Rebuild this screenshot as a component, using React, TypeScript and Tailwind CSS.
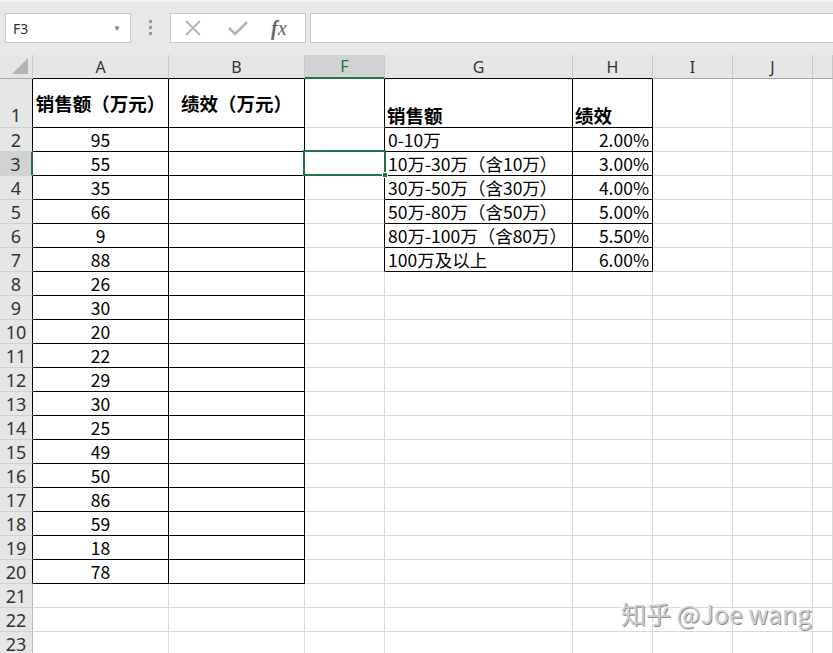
import type { ReactNode } from "react";

const COLS = ["A", "B", "F", "G", "H", "I", "J", "K"];
const SALES = [95, 55, 35, 66, 9, 88, 26, 30, 20, 22, 29, 30, 25, 49, 50, 86, 59, 18, 78];
const TIERS: [string, string][] = [
  ["0-10万", "2.00%"],
  ["10万-30万（含10万）", "3.00%"],
  ["30万-50万（含30万）", "4.00%"],
  ["50万-80万（含50万）", "5.00%"],
  ["80万-100万（含80万）", "5.50%"],
  ["100万及以上", "6.00%"],
];
const ROWS = 23;

function Cell({ row, col }: { row: number; col: string }) {
  const inLeft = (col === "A" || col === "B") && row <= 20;
  const inRight = (col === "G" || col === "H") && row <= 7;
  const leftOfRight = col === "F" && row <= 7;
  const black = inLeft || inRight;

  let cls = "relative flex min-w-0 overflow-hidden whitespace-nowrap border-r border-b leading-[22px] ";
  cls += black ? "border-b-black " : "border-b-[#d9d9d9] ";
  cls += black || leftOfRight ? "border-r-black " : "border-r-[#d9d9d9] ";

  let content: ReactNode = null;
  if (row === 1 && col === "A") {
    cls += "items-center justify-center font-bold text-[18.5px]";
    content = "销售额（万元）";
  } else if (row === 1 && col === "B") {
    cls += "items-center justify-center font-bold text-[18.5px]";
    content = "绩效（万元）";
  } else if (row === 1 && (col === "G" || col === "H")) {
    cls += "items-end pl-[2px] pb-[1px] font-bold text-[18.5px]";
    content = col === "G" ? "销售额" : "绩效";
  } else if (col === "A" && row >= 2 && row <= 20) {
    cls += "items-center justify-center";
    content = SALES[row - 2];
  } else if (col === "G" && row >= 2 && row <= 7) {
    cls += "items-center pl-[3px]";
    content = TIERS[row - 2][0];
  } else if (col === "H" && row >= 2 && row <= 7) {
    cls += "items-center justify-end pr-[3px]";
    content = TIERS[row - 2][1];
  }

  return <div className={cls}>{content}</div>;
}

function Toolbar() {
  return (
    <div className="flex h-[55px] items-start border-t-2 border-t-[#f3f3f3] bg-[#e8e8e8] pt-[11px]">
      <div className="ml-[5px] flex h-[30px] w-[126px] items-center justify-between border border-[#c8c8c8] bg-white pl-[7px] pr-[9px] font-['Noto_Sans',sans-serif] text-[14px] text-[#333]">
        <span>F3</span>
        <span className="text-[8px] text-[#777]">▼</span>
      </div>
      <div className="flex w-[39px] flex-col items-center justify-center gap-[3px] pt-[7px]">
        <span className="h-[3px] w-[3px] bg-[#9a9a9a]" />
        <span className="h-[3px] w-[3px] bg-[#9a9a9a]" />
        <span className="h-[3px] w-[3px] bg-[#9a9a9a]" />
      </div>
      <div className="flex h-[30px] w-[136px] items-center border border-[#c8c8c8] bg-white">
        <svg width="20" height="20" viewBox="0 0 20 20" className="ml-[12px]">
          <path d="M3 3 L17 17 M17 3 L3 17" stroke="#b5b5b5" strokeWidth="1.8" fill="none" />
        </svg>
        <svg width="22" height="20" viewBox="0 0 22 20" className="ml-[24px]">
          <path d="M2 10 L8 16 L20 4" stroke="#b5b5b5" strokeWidth="2.6" fill="none" />
        </svg>
        <span className="ml-[22px] font-['Liberation_Serif',serif] text-[20px] italic text-[#666]">
          <span className="font-bold">f</span>x
        </span>
      </div>
      <div className="ml-[4px] h-[30px] flex-1 border border-r-0 border-[#c8c8c8] bg-white" />
    </div>
  );
}

function Row({ row }: { row: number }) {
  const active = row === 3;
  const blackRight = row <= 20;
  return (
    <>
      <div
        className={
          "flex justify-center border-b border-b-[#d0d0d0] font-['Noto_Sans',sans-serif] text-[18px] leading-[22px] " +
          (row === 1 ? "items-end pb-[1px] " : "items-center ") +
          (active
            ? "border-r-2 border-r-[#217346] bg-[#d2d2d2] text-[#333]"
            : "border-r bg-[#e6e6e6] text-[#333] " + (blackRight ? "border-r-black" : "border-r-[#b8b8b8]"))
        }
      >
        {row}
      </div>
      {COLS.map((c) => (
        <Cell key={c} row={row} col={c} />
      ))}
    </>
  );
}

export default function App() {
  const grid =
    "grid grid-cols-[33px_136px_136px_80px_188px_80px_80px_80px_1fr] grid-rows-[24px_49px_repeat(22,24px)]";
  return (
    <div className="relative h-[653px] w-[833px] overflow-hidden bg-white font-['Noto_Sans_CJK_SC',sans-serif] text-[17.5px] text-black">
      <Toolbar />
      <div className={grid}>
        {/* corner */}
        <div className="flex items-end justify-end border-r border-b border-r-[#c8c8c8] border-b-[#a8a8a8] bg-[#e6e6e6] pr-[4px] pb-[4px]">
          <svg width="16" height="16" viewBox="0 0 16 16">
            <path d="M16 0 L16 16 L0 16 Z" fill="#b4b4b4" />
          </svg>
        </div>
        {COLS.map((c) => {
          const active = c === "F";
          const tableTop = c === "A" || c === "B" || c === "G" || c === "H";
          return (
            <div
              key={c}
              className={
                "flex items-center justify-center border-r font-['Noto_Sans',sans-serif] text-[16px] leading-[20px] " +
                (active
                  ? "border-b-2 border-r-[#c8c8c8] border-b-[#217346] bg-[#d2d2d2] text-[#217346]"
                  : "border-b border-r-[#c8c8c8] bg-[#e6e6e6] text-[#333] " +
                    (tableTop ? "border-b-black" : "border-b-[#a8a8a8]"))
              }
            >
              {c === "K" ? "" : c}
            </div>
          );
        })}
        {Array.from({ length: ROWS }, (_, i) => i + 1).map((r) => (
          <Row key={r} row={r} />
        ))}
      </div>

      {/* active cell F3 */}
      <div className="pointer-events-none absolute left-[303px] top-[150px] h-[26px] w-[83px] border-2 border-[#217346]">
        <span className="absolute -right-[4px] -bottom-[4px] h-[6px] w-[6px] border border-white bg-[#217346]" />
      </div>

      {/* watermark */}
      <div className="pointer-events-none absolute left-[621px] top-[596px] whitespace-nowrap font-['Noto_Sans_CJK_SC',sans-serif] text-[25px] leading-[34px] text-[#cfcfcf] [text-shadow:1px_1px_0_#8e8e8e,-1px_-1px_0_#ffffff]">
        知乎 @Joe wang
      </div>
    </div>
  );
}
